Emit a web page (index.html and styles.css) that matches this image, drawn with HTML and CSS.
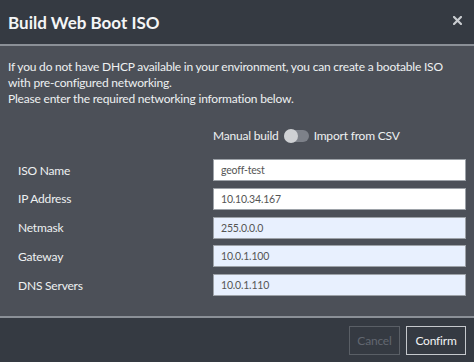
FILE: index.html
```html
<!DOCTYPE html>
<html lang="en">
<head>
    <meta charset="UTF-8">
    <title>Build Web Boot ISO</title>
    <link rel="stylesheet" href="styles.css">
</head>
<body>
    <div class="modal">
        <div class="modal-header">
            <h1>Build Web Boot ISO</h1>
            <svg class="close" width="9" height="9" viewBox="0 0 9 9">
                <path d="M1 1 L8 8 M8 1 L1 8" stroke="#c9ccd0" stroke-width="2.2" stroke-linecap="square"/>
            </svg>
        </div>
        <div class="modal-body">
            <p class="intro">If you do not have DHCP available in your environment, you can create a bootable ISO<br>with pre-configured networking.<br>Please enter the required networking information below.</p>
            <div class="mode-row">
                <span>Manual build</span>
                <span class="toggle"><span class="knob"></span></span>
                <span>Import from CSV</span>
            </div>
            <div class="form">
                <label>ISO Name</label>
                <input type="text" value="geoff-test">
                <label>IP Address</label>
                <input type="text" value="10.10.34.167">
                <label>Netmask</label>
                <input type="text" class="filled" value="255.0.0.0">
                <label>Gateway</label>
                <input type="text" class="filled" value="10.0.1.100">
                <label>DNS Servers</label>
                <input type="text" class="filled" value="10.0.1.110">
            </div>
        </div>
        <div class="modal-footer">
            <button class="btn disabled">Cancel</button>
            <button class="btn">Confirm</button>
        </div>
    </div>
</body>
</html>
```
FILE: styles.css
```css
body {
    margin: 0;
    width: 474px;
    height: 362px;
    overflow: hidden;
    background: #353a42;
    font-family: Lato, "Open Sans", sans-serif;
    font-size: 12px;
    letter-spacing: -0.2px;
    color: #eef0f2;
}

.modal {
    display: flex;
    flex-direction: column;
    height: 362px;
}

.modal-header {
    height: 44px;
    display: flex;
    align-items: center;
    justify-content: space-between;
    padding: 0 12px 0 8px;
    background: #353a42;
    border-bottom: 2px solid #8b9097;
}

.modal-header h1 {
    margin: 0;
    font-size: 17px;
    font-weight: 700;
    letter-spacing: 0;
    color: #f4f5f6;
}

.close {
    margin-top: -4px;
}

.modal-body {
    flex: 1;
    background: #4c5058;
    padding: 13px 8px 0 8px;
    border-bottom: 2px solid #8b9097;
}

.intro {
    margin: 0;
    line-height: 16px;
    white-space: nowrap;
}

.mode-row {
    display: flex;
    align-items: center;
    gap: 3px;
    margin: 21px 0 0 205px;
}

.toggle {
    width: 25px;
    height: 12px;
    border-radius: 6px;
    background: #7d8189;
    position: relative;
    margin: 0 2px;
}

.knob {
    position: absolute;
    left: 0;
    top: -1px;
    width: 14px;
    height: 14px;
    border-radius: 50%;
    background: #cfd1d4;
}

.form {
    display: grid;
    grid-template-columns: 195px 1fr;
    row-gap: 6.75px;
    align-items: center;
    margin-top: 16px;
    padding-left: 10px;
}

.form input {
    height: 22px;
    box-sizing: border-box;
    border: 1px solid #9da2a8;
    background: #ffffff;
    padding: 0 7px;
    font-family: inherit;
    font-size: 10.5px;
    letter-spacing: -0.2px;
    color: #555;
    margin: 0;
}

.form input.filled {
    background: #e8f0fe;
}

.modal-footer {
    height: 44px;
    display: flex;
    justify-content: flex-end;
    align-items: center;
    gap: 6px;
    padding: 0 8px;
    background: #353a42;
}

.btn {
    height: 29px;
    width: 60px;
    padding: 0;
    background: #353a42;
    border: 1px solid #c5c8cc;
    color: #f2f3f4;
    font-family: inherit;
    font-size: 12px;
    letter-spacing: -0.2px;
}

.btn.disabled {
    border-color: #5a5f66;
    color: #626770;
    width: 51px;
}
```
